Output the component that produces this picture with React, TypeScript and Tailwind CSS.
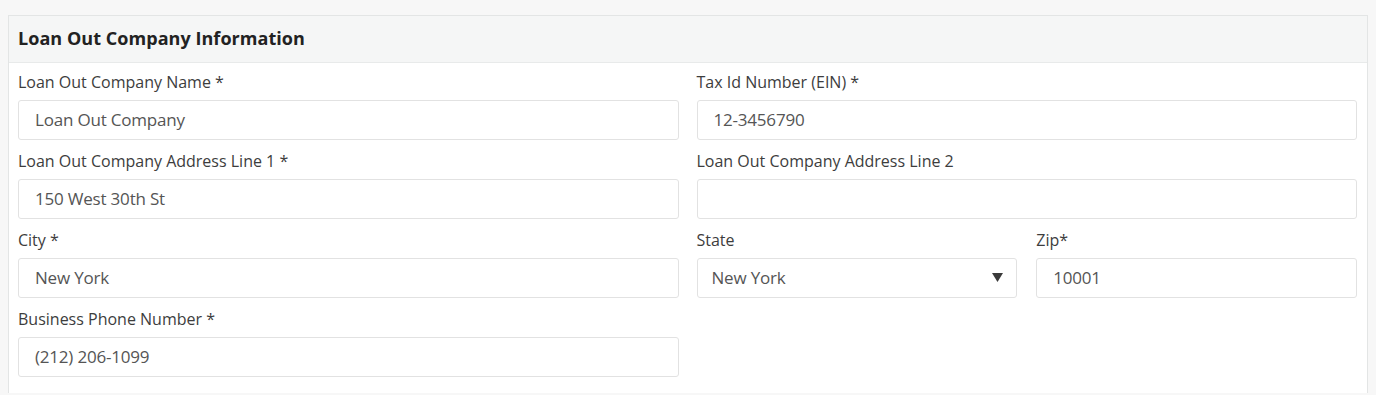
const FONT = "font-['Open_Sans',sans-serif]";

function Field({ label, value }: { label: string; value?: string }) {
  return (
    <div className="flex flex-col">
      <label className="text-[16px] leading-[22px] text-[#3d3d3d] mb-[7px]">{label}</label>
      <div className="h-10 border border-[#e2e2e2] rounded-[3px] bg-white flex items-center pl-4 text-[17px] text-[#555] tracking-[-0.2px]">
        {value}
      </div>
    </div>
  );
}

export default function App() {
  return (
    <div className={`min-h-screen bg-[#f7f7f7] pt-[15px] px-2 ${FONT}`}>
      <div className="bg-white border border-[#e3e5e5] border-b-0">
        {/* Header */}
        <div className="h-[47px] bg-[#f5f6f6] border-b border-[#e8eaea] flex items-center px-[9px]">
          <h2 className="text-[18px] leading-6 font-bold text-[#222] tracking-[0.05px] -mt-[2px]">Loan Out Company Information</h2>
        </div>

        {/* Body */}
        <div className="px-[9px] pt-[8px] pb-4 grid grid-cols-2 gap-x-[18px] gap-y-[10px] pr-[10px]">
          <Field label="Loan Out Company Name *" value="Loan Out Company" />
          <Field label="Tax Id Number (EIN) *" value="12-3456790" />
          <Field label="Loan Out Company Address Line 1 *" value="150 West 30th St" />
          <Field label="Loan Out Company Address Line 2" />
          <Field label="City *" value="New York" />
          <div className="grid grid-cols-2 gap-x-[19px]">
            <div className="flex flex-col">
              <label className="text-[16px] leading-[22px] text-[#3d3d3d] mb-[7px]">State</label>
              <div className="h-10 border border-[#e2e2e2] rounded-[3px] bg-white flex items-center justify-between pl-[14px] pr-[13px] text-[17px] text-[#555] tracking-[-0.2px]">
                <span>New York</span>
                <svg width="11" height="9" viewBox="0 0 11 9" className="-mt-[2px]">
                  <path d="M0 0H11L5.5 9Z" fill="#3a3a3a" />
                </svg>
              </div>
            </div>
            <Field label="Zip*" value="10001" />
          </div>
          <Field label="Business Phone Number *" value="(212) 206-1099" />
        </div>
      </div>
    </div>
  );
}
